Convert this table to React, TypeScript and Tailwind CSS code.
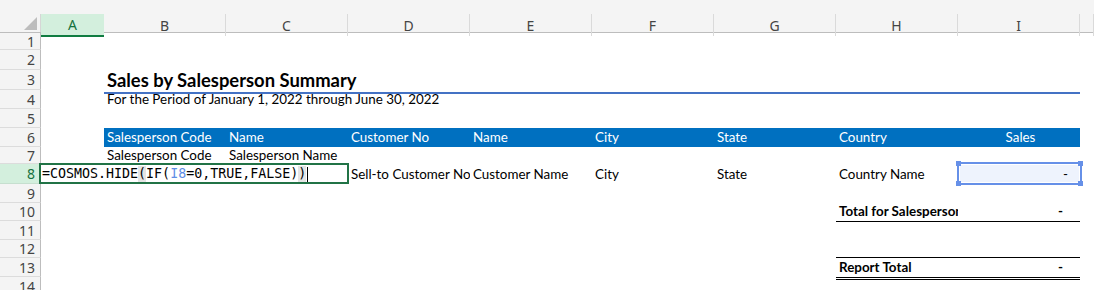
import type { ReactNode } from "react";

const body = "font-['Lato',sans-serif]";
const hdr = "font-['Noto_Sans',sans-serif]";
const cols = "grid flex-1 grid-cols-[63px_repeat(8,122px)_1fr]";

function Row({ n, h, active, children }: { n: number; h: string; active?: boolean; children?: ReactNode }) {
  return (
    <div className={`flex ${h}`}>
      <div
        className={`${hdr} flex w-[41px] shrink-0 items-center justify-end border-r border-b border-r-[#bdbdbd] pr-[5px] text-[14px] ${
          active ? "border-b-[#c6dfcf] bg-[#d3efdd] text-[#14713d]" : "border-b-[#dcdcdc] bg-[#f4f4f4] text-[#444]"
        }`}
      >
        {n}
      </div>
      <div className={cols}>{children}</div>
    </div>
  );
}

function Cell({ className = "", children }: { className?: string; children?: ReactNode }) {
  return (
    <div className={`${body} flex items-end whitespace-nowrap pb-[2px] pl-[3px] text-[13.4px] leading-[16px] text-black ${className}`}>
      {children}
    </div>
  );
}

const letters = ["A", "B", "C", "D", "E", "F", "G", "H", "I", ""];

export default function App() {
  return (
    <div className="h-[290px] w-[1094px] overflow-hidden bg-white">
      <div className="h-[14px] bg-[#f4f4f4]" />
      {/* column header */}
      <div className="flex h-[19px] border-b border-[#bdbdbd] bg-[#f4f4f4]">
        <div className="flex w-[41px] shrink-0 items-end justify-end border-r border-[#d6d6d6] pr-[3px] pb-[2px]">
          <svg width="13" height="13" viewBox="0 0 13 13">
            <polygon points="13,0 13,13 0,13" fill="#bdbdbd" />
          </svg>
        </div>
        <div className={cols}>
          {letters.map((l, i) => (
            <div
              key={i}
              className={`${hdr} flex items-center justify-center text-[14px] ${
                i === 0
                  ? "-mb-[1px] border-b-2 border-b-[#107c41] bg-[#d3efdd] text-[#14713d]"
                  : "border-r border-[#dadada] text-[#444]"
              }`}
            >
              {l}
            </div>
          ))}
        </div>
      </div>

      <Row n={1} h="h-[17px]" />
      <Row n={2} h="h-[20px]" />
      <Row n={3} h="h-[20px]">
        <Cell className="col-start-2 col-span-8 border-b-2 border-[#4472c4] pb-[1px] text-[18.4px] font-bold leading-[20px] text-[#44546a]">
          Sales by Salesperson Summary
        </Cell>
      </Row>
      <Row n={4} h="h-[19px]">
        <Cell className="col-start-2 col-span-8">For the Period of January 1, 2022 through June 30, 2022</Cell>
      </Row>
      <Row n={5} h="h-[19px]" />
      <Row n={6} h="h-[19px]">
        <Cell className="col-start-2 bg-[#0070c0] text-white">Salesperson Code</Cell>
        <Cell className="bg-[#0070c0] text-white">Name</Cell>
        <Cell className="bg-[#0070c0] text-white">Customer No</Cell>
        <Cell className="bg-[#0070c0] text-white">Name</Cell>
        <Cell className="bg-[#0070c0] text-white">City</Cell>
        <Cell className="bg-[#0070c0] text-white">State</Cell>
        <Cell className="bg-[#0070c0] text-white">Country</Cell>
        <Cell className="justify-center bg-[#0070c0] pl-0 text-white">Sales</Cell>
      </Row>
      <Row n={7} h="h-[17px]">
        <Cell className="col-start-2 pb-[1px]">Salesperson Code</Cell>
        <Cell className="pb-[1px]">Salesperson Name</Cell>
      </Row>
      <Row n={8} h="h-[20px]" active>
        <div className="relative col-span-3 flex items-center pl-[1px] font-['DejaVu_Sans_Mono',monospace] text-[13.3px] text-black">
          <div className="absolute -top-[1px] -right-[1px] bottom-0 -left-[2px] border-2 border-[#217346]" />
          <span>=COSMOS.HIDE</span>
          <span className="bg-[#e4e4e4] leading-[16px]">(</span>
          <span>IF(</span>
          <span className="text-[#5f8ee6]">I8</span>
          <span>=0,TRUE,FALSE)</span>
          <span className="bg-[#e4e4e4] leading-[16px]">)</span>
          <span className="ml-[1px] h-[15px] w-px bg-black" />
        </div>
        <Cell className="overflow-hidden">Sell-to Customer No</Cell>
        <Cell>Customer Name</Cell>
        <Cell>City</Cell>
        <Cell>State</Cell>
        <Cell>Country Name</Cell>
        <Cell className="relative justify-end bg-[#eef3fd] pr-[12px]">
          <div className="absolute -top-[2px] -right-[2px] -bottom-[1px] -left-[1px] border-2 border-[#6690e8] shadow-[inset_0_0_0_1px_white]">
            <span className="absolute -top-[3px] -left-[3px] h-[5px] w-[5px] bg-[#6690e8]" />
            <span className="absolute -top-[3px] -right-[3px] h-[5px] w-[5px] bg-[#6690e8]" />
            <span className="absolute -bottom-[3px] -left-[3px] h-[5px] w-[5px] bg-[#6690e8]" />
            <span className="absolute -right-[3px] -bottom-[3px] h-[5px] w-[5px] bg-[#6690e8]" />
          </div>
          <span className="relative">-</span>
        </Cell>
      </Row>
      <Row n={9} h="h-[19px]" />
      <Row n={10} h="h-[18px]">
        <Cell className="col-start-8 overflow-hidden border-b border-black pb-[1px] font-bold">Total for Salesperson</Cell>
        <Cell className="justify-end border-b border-black pb-[1px] pr-[17px] font-bold">-</Cell>
      </Row>
      <Row n={11} h="h-[19px]" />
      <Row n={12} h="h-[18px]">
        <div className="col-start-8 border-b border-black" />
        <div className="border-b border-black" />
      </Row>
      <Row n={13} h="h-[19px]">
        <Cell className="col-start-8 font-bold">Report Total</Cell>
        <Cell className="justify-end pr-[17px] font-bold">-</Cell>
      </Row>
      <Row n={14} h="h-[19px]">
        <div className="col-start-8 border-t-[3px] border-double border-black" />
        <div className="border-t-[3px] border-double border-black" />
      </Row>
    </div>
  );
}
